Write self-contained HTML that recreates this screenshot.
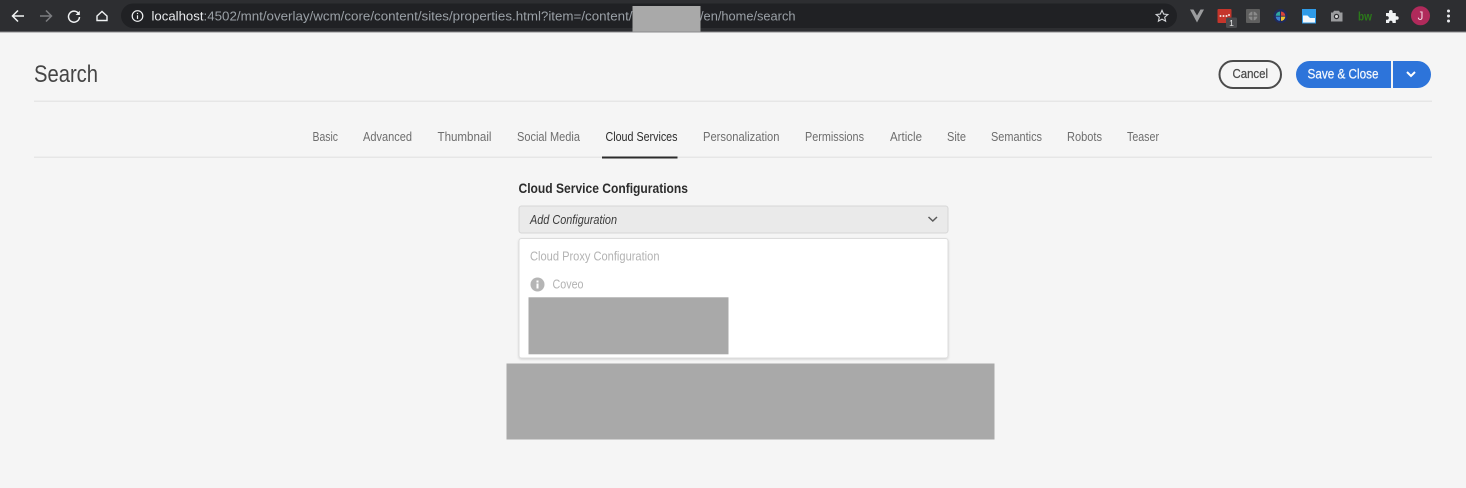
<!DOCTYPE html>
<html><head><meta charset="utf-8"><style>
html,body{margin:0;padding:0;width:1466px;height:488px;overflow:hidden;background:#f5f5f5}
svg{display:block}
text{font-family:"Liberation Sans",sans-serif}
.t{font-size:12.5px;fill:#6e6e6e}
</style></head><body>
<svg width="1466" height="488" viewBox="0 0 1466 488" xmlns="http://www.w3.org/2000/svg">
<defs><filter id="s" x="-5%" y="-5%" width="110%" height="115%"><feDropShadow dx="0" dy="1" stdDeviation="1" flood-color="#000" flood-opacity="0.15"/></filter></defs>
<rect width="1466" height="488" fill="#f5f5f5"/>
<!-- browser bar -->
<rect width="1466" height="32" fill="#2d2e31"/>
<rect y="31.5" width="1466" height="1" fill="#8a8b8d"/>
<rect x="121" y="3.500" width="1056" height="24.500" rx="12.250" fill="#202124"/>
<g fill="none" stroke="#f1f3f4" stroke-width="1.5">
<path d="M24 16H12.500M18 10.500L12.500 16L18 21.500"/>
<path d="M40 16H51.500M46 10.500L51.500 16L46 21.500" stroke="#7c7d80"/>
<path d="M78.500 13.500A5.500 5.500 0 1 0 79.500 17"/>
<path d="M97 16L102 11.500L107 16V20.500H97Z" stroke-width="1.400"/>
<circle cx="137.500" cy="16" r="5.300" stroke-width="1.200"/>
</g>
<path d="M79.800 10.800V15H75.600Z" fill="#f1f3f4"/>
<rect x="136.900" y="15.300" width="1.200" height="3.600" fill="#f1f3f4"/>
<rect x="136.900" y="12.900" width="1.200" height="1.200" fill="#f1f3f4"/>
<text x="151.500" y="20.500" font-size="13" fill="#e8eaed" textLength="52" lengthAdjust="spacingAndGlyphs">localhost</text>
<text x="203.500" y="20.500" font-size="13" fill="#9aa0a6" textLength="429" lengthAdjust="spacingAndGlyphs">:4502/mnt/overlay/wcm/core/content/sites/properties.html?item=/content/</text>
<text x="700" y="20.500" font-size="13" fill="#9aa0a6" textLength="95.500" lengthAdjust="spacingAndGlyphs">/en/home/search</text>
<rect x="632.500" y="6" width="68" height="25.500" fill="#a9a9a9"/>
<path d="M1162 10.300l1.700 3.800 4.100.4-3.100 2.700.9 4-3.600-2.100-3.600 2.100.9-4-3.100-2.700 4.100-.4z" fill="none" stroke="#d5d7da" stroke-width="1.100"/>
<!-- extensions -->
<path d="M1190 9.500h3.500l3.500 6 3.500-6h3.500l-7 13z" fill="#9b9c9e"/>
<rect x="1217.500" y="9" width="14" height="14" rx="1" fill="#c5352b"/>
<g fill="#f4e3e1"><circle cx="1220.500" cy="16" r="1"/><circle cx="1223.500" cy="16" r="1"/><circle cx="1226.500" cy="16" r="1"/><circle cx="1229" cy="15" r="1"/></g>
<rect x="1226" y="17.500" width="11" height="10.500" rx="1.500" fill="#4a4b4e"/>
<text x="1231.500" y="26" font-size="8.500" fill="#e8e8e8" text-anchor="middle">1</text>
<rect x="1246" y="9" width="14" height="14" rx="1" fill="#5f5f5f"/>
<circle cx="1253" cy="16" r="4.500" fill="#8a8a8a"/>
<path d="M1253 10.500v11M1247.500 16h11" stroke="#5f5f5f" stroke-width="1.300"/>
<circle cx="1280.500" cy="16" r="7" fill="#1f2a5c"/>
<path d="M1280 11.500a4.500 4.500 0 0 0-4.300 4.200h4.300z" fill="#2fa8a0"/>
<path d="M1281 11.500a4.500 4.500 0 0 1 4.300 4.200H1281z" fill="#d8443a"/>
<path d="M1280 16.600v4.300a4.500 4.500 0 0 1-4.300-4.300z" fill="#3c7fd0"/>
<path d="M1281 16.600v4.300a4.500 4.500 0 0 0 4.300-4.300z" fill="#eec42f"/>
<rect x="1302" y="9" width="14" height="14.500" fill="#2f9be8"/>
<path d="M1303 15.500h4.500l2.500 2.500h5v4.500h-12z" fill="#f4f8fb"/>
<path d="M1331 12.500h2l1-1.800h5l1 1.800h2.500v9h-11.500z" fill="#9b9c9e"/>
<circle cx="1336.500" cy="16.500" r="2.700" fill="#2d2e31"/><circle cx="1336.500" cy="16.500" r="1.500" fill="#dcdcdc"/>
<text x="1358" y="20.500" font-size="12" font-weight="bold" fill="#2b7a1a" textLength="14" lengthAdjust="spacingAndGlyphs">bw</text>
<path d="M1386 13h3v-1.200a1.800 1.800 0 0 1 3.600 0V13h3.200v3.200h1.100a1.800 1.800 0 0 1 0 3.600h-1.100V23h-3.300v-1.100a1.700 1.700 0 0 0-3.300 0V23H1386v-3.300h1a1.800 1.800 0 0 0 0-3.600h-1z" fill="#f1f3f4"/>
<circle cx="1420.500" cy="15.800" r="9.500" fill="#b02a5b"/>
<text x="1420.500" y="20" font-size="11.500" fill="#f3dbe4" text-anchor="middle">J</text>
<g fill="#e8eaed"><circle cx="1448.500" cy="11" r="1.500"/><circle cx="1448.500" cy="16" r="1.500"/><circle cx="1448.500" cy="21" r="1.500"/></g>
<!-- header -->
<text x="34" y="82" font-size="24" fill="#454545" textLength="64" lengthAdjust="spacingAndGlyphs">Search</text>
<rect x="34" y="100.500" width="1398" height="1.500" fill="#e6e6e6"/>
<rect x="1219.500" y="61" width="61.500" height="27" rx="13.500" fill="#f5f5f5" stroke="#4b4b4b" stroke-width="2"/>
<text x="1232.500" y="78" font-size="12.500" fill="#4b4b4b" stroke="#4b4b4b" stroke-width="0.250" textLength="35.500" lengthAdjust="spacingAndGlyphs">Cancel</text>
<path d="M1309.500 61H1391V88H1309.500A13.500 13.500 0 0 1 1309.500 61Z" fill="#2d74da"/>
<path d="M1393 61H1417.500A13.500 13.500 0 0 1 1417.500 88H1393Z" fill="#2d74da"/>
<text x="1307.500" y="78.500" font-size="13.500" fill="#f4f8fd" stroke="#f4f8fd" stroke-width="0.250" textLength="71" lengthAdjust="spacingAndGlyphs">Save &amp; Close</text>
<path d="M1407 72L1411 76L1415 72" fill="none" stroke="#fff" stroke-width="2"/>
<!-- tabs -->
<rect x="34" y="156.500" width="1398" height="1.500" fill="#e6e6e6"/>
<rect x="602" y="156.500" width="75.500" height="2" fill="#2c2c2c"/>
<text class="t" x="312.500" y="141" textLength="25.500" lengthAdjust="spacingAndGlyphs">Basic</text>
<text class="t" x="363" y="141" textLength="49" lengthAdjust="spacingAndGlyphs">Advanced</text>
<text class="t" x="437.500" y="141" textLength="54" lengthAdjust="spacingAndGlyphs">Thumbnail</text>
<text class="t" x="517" y="141" textLength="63" lengthAdjust="spacingAndGlyphs">Social Media</text>
<text class="t" x="605.500" y="141" textLength="72" lengthAdjust="spacingAndGlyphs" style="fill:#2c2c2c">Cloud Services</text>
<text class="t" x="703" y="141" textLength="76.500" lengthAdjust="spacingAndGlyphs">Personalization</text>
<text class="t" x="805" y="141" textLength="59" lengthAdjust="spacingAndGlyphs">Permissions</text>
<text class="t" x="890" y="141" textLength="32" lengthAdjust="spacingAndGlyphs">Article</text>
<text class="t" x="947" y="141" textLength="19" lengthAdjust="spacingAndGlyphs">Site</text>
<text class="t" x="991" y="141" textLength="51" lengthAdjust="spacingAndGlyphs">Semantics</text>
<text class="t" x="1067" y="141" textLength="35" lengthAdjust="spacingAndGlyphs">Robots</text>
<text class="t" x="1127" y="141" textLength="32" lengthAdjust="spacingAndGlyphs">Teaser</text>
<!-- form -->
<text x="518.500" y="193" font-size="13.500" font-weight="bold" fill="#2c2c2c" textLength="169.500" lengthAdjust="spacingAndGlyphs">Cloud Service Configurations</text>
<rect x="519" y="206" width="429" height="27" rx="2.500" fill="#eaeaea" stroke="#d6d6d6"/>
<text x="530" y="224" font-size="12.500" font-style="italic" fill="#3a3a3a" textLength="87" lengthAdjust="spacingAndGlyphs">Add Configuration</text>
<path d="M928.500 217L932.800 221L937 217" fill="none" stroke="#5a5a5a" stroke-width="1.500"/>
<rect x="519" y="238.500" width="429" height="119.500" rx="2.500" fill="#fff" stroke="#dcdcdc" filter="url(#s)"/>
<text x="530" y="260.500" font-size="12.500" fill="#b3b3b3" textLength="129.500" lengthAdjust="spacingAndGlyphs">Cloud Proxy Configuration</text>
<circle cx="537.500" cy="284.500" r="7" fill="#b5b5b5"/>
<rect x="536.500" y="283.500" width="2" height="5" fill="#fff"/>
<rect x="536.500" y="280.500" width="2" height="2" fill="#fff"/>
<text x="552.500" y="288.500" font-size="12.500" fill="#b3b3b3" textLength="31" lengthAdjust="spacingAndGlyphs">Coveo</text>
<rect x="528.500" y="297.300" width="200" height="57" fill="#a9a9a9"/>
<rect x="506.500" y="363.500" width="488" height="76" fill="#a9a9a9"/>
</svg>
</body></html>
